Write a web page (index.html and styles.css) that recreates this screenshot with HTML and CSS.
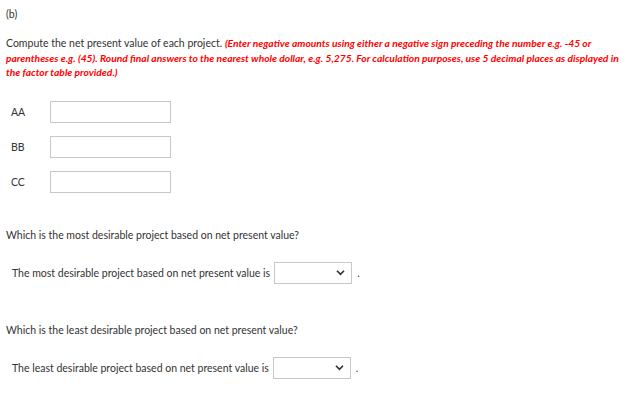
FILE: index.html
```html
<!DOCTYPE html>
<html>
<head>
<meta charset="utf-8">
<link rel="stylesheet" href="styles.css">
</head>
<body>
<div class="page">
  <div class="part">(b)</div>
  <p class="prompt">Compute the net present value of each project. <em class="note">(Enter negative amounts using either a negative sign preceding the number e.g. -45 or parentheses e.g. (45). Round final answers to the nearest whole dollar, e.g. 5,275. For calculation purposes, use 5 decimal places as displayed in the factor table provided.)</em></p>
  <div class="rows">
    <div class="row"><span class="lbl">AA</span><input class="box" type="text"></div>
    <div class="row"><span class="lbl">BB</span><input class="box" type="text"></div>
    <div class="row"><span class="lbl">CC</span><input class="box" type="text"></div>
  </div>
  <p class="q q1">Which is the most desirable project based on net present value?</p>
  <div class="ans">The most desirable project based on net present value is <span class="sel"><svg class="chev" viewBox="0 0 10 8" width="9" height="7"><path d="M1 2 L5 6 L9 2" fill="none" stroke="#333" stroke-width="2"/></svg></span> <span class="dot">.</span></div>
  <p class="q q2">Which is the least desirable project based on net present value?</p>
  <div class="ans">The least desirable project based on net present value is <span class="sel"><svg class="chev" viewBox="0 0 10 8" width="9" height="7"><path d="M1 2 L5 6 L9 2" fill="none" stroke="#333" stroke-width="2"/></svg></span> <span class="dot">.</span></div>
</div>
</body>
</html>
```
FILE: styles.css
```css
html, body { margin: 0; padding: 0; background: #fff; }
body { font-family: Lato, "Liberation Sans", sans-serif; font-size: 10.5px; color: #333; }
.page { padding: 8px 6px 0 6px; }
.part { line-height: 12px; }
.prompt { margin: 16px 0 0 0; line-height: 14.5px; width: 616px; }
.note { color: #f00; font-weight: bold; font-style: italic; font-size: 10.25px; }
.rows { margin-top: 21px; display: flex; flex-direction: column; gap: 13px; padding-left: 5px; }
.row { display: flex; align-items: center; }
.lbl { width: 39px; }
.box { width: 121px; height: 22px; box-sizing: border-box; border: 1px solid #c8c8c8; border-radius: 0; margin: 0; padding: 0; }
.q { margin: 0; line-height: 12px; }
.q1 { margin-top: 36px; }
.q2 { margin-top: 40px; }
.ans { display: flex; align-items: center; padding-left: 6px; margin-top: 21px; }
.sel { display: inline-flex; align-items: center; justify-content: flex-end; width: 78px; height: 22px; box-sizing: border-box; border: 1px solid #c8c8c8; margin-left: 4px; padding-right: 6px; }
.dot { margin-left: 5px; }
```
